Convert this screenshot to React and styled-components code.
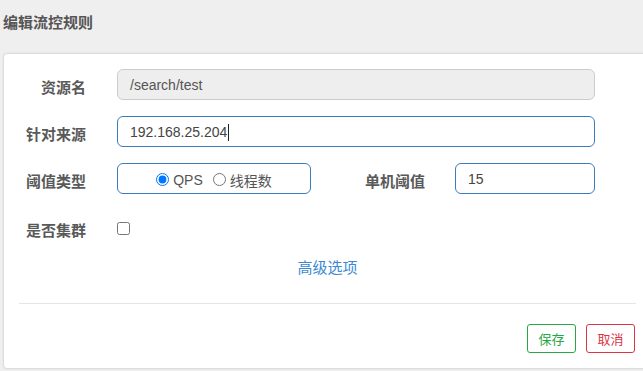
import React from "react";
import styled, { createGlobalStyle } from "styled-components";

const Global = createGlobalStyle`
  html, body { margin: 0; padding: 0; background: #efefef; overflow: hidden; }
  body { font-family: "Liberation Sans", "Noto Sans CJK SC", Arial, sans-serif; }
`;

const Page = styled.div`
  width: 643px;
  height: 371px;
  background: #efefef;
  padding-left: 3px;
  box-sizing: border-box;
`;

const Title = styled.h4`
  margin: 0;
  height: 53px;
  display: flex;
  align-items: center;
  padding-bottom: 10px;
  box-sizing: border-box;
  font-size: 15px;
  font-weight: 700;
  color: #555;
  font-family: "Liberation Sans", "Noto Sans CJK SC", sans-serif;
`;

const Card = styled.div`
  width: 649px;
  background: #fff;
  border: 1px solid #dcdcdc;
  border-radius: 4px;
  box-shadow: 0 0 2px rgba(0, 0, 0, 0.08);
  box-sizing: border-box;
`;

const Form = styled.div`
  padding-top: 15px;
  display: flex;
  flex-direction: column;
`;

const Row = styled.div`
  display: flex;
  align-items: center;
  height: 31px;
  margin-top: ${(p) => p.$gap || 0}px;
`;

const Label = styled.label`
  width: ${(p) => p.$w || 82}px;
  margin-left: ${(p) => p.$ml || 0}px;
  margin-right: ${(p) => p.$mr || 31}px;
  padding-top: 4px;
  text-align: right;
  font-size: 15px;
  font-weight: 700;
  color: #595959;
  font-family: "Noto Sans CJK SC", sans-serif;
  flex-shrink: 0;
`;

const Field = styled.div`
  width: ${(p) => p.$w}px;
  height: 31px;
  box-sizing: border-box;
  border: 1px solid ${(p) => (p.$disabled ? "#cccccc" : "#3a7cc0")};
  background: ${(p) => (p.$disabled ? "#eeeeee" : "#fff")};
  border-radius: 6px;
  padding: 1px 12px 0;
  display: flex;
  align-items: center;
  font-size: 14px;
  color: ${(p) => (p.$disabled ? "#555" : "#444")};
  font-family: "Liberation Sans", Arial, sans-serif;
`;

const Caret = styled.span`
  display: inline-block;
  width: 1px;
  height: 17px;
  background: #222;
  margin-left: 1px;
`;

const RadioBox = styled.div`
  width: 194px;
  height: 31px;
  box-sizing: border-box;
  border: 1px solid #3a7cc0;
  border-radius: 6px;
  padding-top: 2px;
  display: flex;
  align-items: center;
  justify-content: center;
  gap: 10px;
`;

const RadioLabel = styled.label`
  display: flex;
  align-items: center;
  font-size: 14px;
  color: #555;
  font-family: "Liberation Sans", "Noto Sans CJK SC", sans-serif;
`;

const Radio = styled.input.attrs({ type: "radio" })`
  width: 13px;
  height: 13px;
  margin: 0 4px 0 0;
`;

const Check = styled.input.attrs({ type: "checkbox" })`
  width: 13px;
  height: 13px;
  margin: 1px 0 0;
`;

const AdvRow = styled.div`
  margin-top: 13px;
  height: 20px;
  display: flex;
  align-items: center;
  justify-content: center;
`;

const Link = styled.a`
  font-size: 15px;
  color: #3b89d4;
  text-decoration: none;
  font-family: "Noto Sans CJK SC", sans-serif;
`;

const Divider = styled.hr`
  margin: 27px 15px 0 15px;
  border: 0;
  border-top: 1px solid #e5e5e5;
  height: 0;
`;

const Footer = styled.div`
  display: flex;
  justify-content: flex-end;
  gap: 10px;
  padding: 20px 16px 15px 0;
`;

const Button = styled.button`
  width: 49px;
  height: 29px;
  box-sizing: border-box;
  background: #fff;
  border: 1px solid ${(p) => p.$color};
  color: ${(p) => p.$color};
  border-radius: 3px;
  font-size: 13px;
  padding: 0;
  font-family: "Noto Sans CJK SC", sans-serif;
`;

export default function App() {
  return (
    <>
      <Global />
      <Page>
        <Title>编辑流控规则</Title>
        <Card>
          <Form>
            <Row>
              <Label>资源名</Label>
              <Field $w={478} $disabled>/search/test</Field>
            </Row>
            <Row $gap={16}>
              <Label>针对来源</Label>
              <Field $w={478}>
                192.168.25.204
                <Caret />
              </Field>
            </Row>
            <Row $gap={16}>
              <Label>阈值类型</Label>
              <RadioBox>
                <RadioLabel>
                  <Radio name="grade" defaultChecked />
                  QPS
                </RadioLabel>
                <RadioLabel>
                  <Radio name="grade" />
                  线程数
                </RadioLabel>
              </RadioBox>
              <Label $ml={32} $mr={30}>单机阈值</Label>
              <Field $w={140}>15</Field>
            </Row>
            <Row $gap={18}>
              <Label>是否集群</Label>
              <Check />
            </Row>
            <AdvRow>
              <Link href="#">高级选项</Link>
            </AdvRow>
          </Form>
          <Divider />
          <Footer>
            <Button $color="#28a745">保存</Button>
            <Button $color="#dc3545">取消</Button>
          </Footer>
        </Card>
      </Page>
    </>
  );
}
